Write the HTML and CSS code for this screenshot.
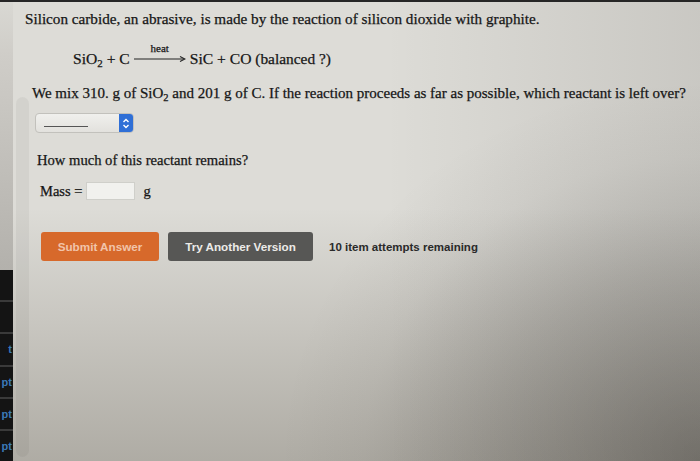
FILE: index.html
```html
<!DOCTYPE html>
<html>
<head>
<meta charset="utf-8">
<link rel="stylesheet" href="styles.css">
</head>
<body>
<div class="screen">
  <div class="topbar"></div>
  <div class="frame">
    <aside class="side">
      <div class="side-light"></div>
      <div class="tabs">
        <div class="tab"></div>
        <div class="tab"></div>
        <div class="tab"><span>t</span></div>
        <div class="tab"><span>pt</span></div>
        <div class="tab"><span>pt</span></div>
        <div class="tab"><span>pt</span></div>
      </div>
    </aside>
    <div class="track"></div>
    <main class="content">
      <p class="intro">Silicon carbide, an abrasive, is made by the reaction of silicon dioxide with graphite.</p>
      <div class="equation">
        <span>SiO<sub>2</sub> + C</span>
        <span class="arrow">
          <span class="heat">heat</span>
          <svg width="52" height="8" viewBox="0 0 52 8"><path d="M0 4 H50" stroke="#222" stroke-width="1.1"/><path d="M46 1.5 L51 4 L46 6.5" fill="none" stroke="#222" stroke-width="1.1"/></svg>
        </span>
        <span>SiC + CO <span class="bal">(balanced ?)</span></span>
      </div>
      <p class="question">We mix 310. g of SiO<sub>2</sub> and 201 g of C. If the reaction proceeds as far as possible, which reactant is left over?</p>
      <div class="select">
        <span class="blank"></span>
        <span class="stepper">
          <svg width="8" height="11" viewBox="0 0 8 11"><path d="M1.5 4 L4 1.5 L6.5 4 M1.5 7 L4 9.5 L6.5 7" fill="none" stroke="#fff" stroke-width="1.4"/></svg>
        </span>
      </div>
      <p class="how">How much of this reactant remains?</p>
      <div class="mass">
        <span>Mass =</span>
        <span class="input"></span>
        <span class="unit">g</span>
      </div>
      <div class="actions">
        <button class="btn submit">Submit Answer</button>
        <button class="btn another">Try Another Version</button>
        <span class="attempts">10 item attempts remaining</span>
      </div>
    </main>
  </div>
</div>
</body>
</html>
```

FILE: styles.css
```css
* { box-sizing: border-box; }
html, body { margin: 0; padding: 0; }
body {
  width: 700px;
  height: 461px;
  overflow: hidden;
  font-family: "Liberation Serif", "Times New Roman", serif;
  color: #161616;
}
.screen {
  width: 700px;
  height: 461px;
  display: flex;
  flex-direction: column;
  background-color: #dddcd7;
  background-image:
    radial-gradient(ellipse 420px 380px at 100% 100%, rgba(25,22,18,0.34) 0, rgba(25,22,18,0.16) 50%, rgba(25,22,18,0.04) 80%, rgba(0,0,0,0) 100%),
    linear-gradient(to right, rgba(0,0,0,0) 0%, rgba(0,0,0,0) 55%, rgba(30,25,20,0.1) 100%),
    linear-gradient(to bottom, rgba(0,0,0,0) 0%, rgba(0,0,0,0) 45%, rgba(50,42,28,0.27) 100%);
}
.topbar {
  height: 2px;
  background: #262626;
}
.frame {
  flex: 1;
  display: flex;
  position: relative;
}
.side {
  width: 13px;
  display: flex;
  flex-direction: column;
}
.side-light {
  height: 268px;
  background: linear-gradient(to bottom, #d9d8d3 0%, #cfcdc8 20%, #b3b1ac 100%);
}
.tabs {
  flex: 1;
  display: flex;
  flex-direction: column;
  gap: 2px;
  background: #3a3a3a;
}
.tab {
  flex: 1;
  background: #141414;
  font-family: "Liberation Sans", Arial, sans-serif;
  font-weight: bold;
  font-size: 11px;
  color: #3b79b8;
  display: flex;
  align-items: center;
  justify-content: flex-end;
  padding-right: 1px;
  overflow: hidden;
}
.track {
  position: absolute;
  left: 16px;
  top: 95px;
  width: 13px;
  height: 360px;
  border-radius: 7px;
  background: rgba(0,0,0,0.045);
}
.content {
  flex: 1;
  padding: 7px 0 0 12px;
  position: relative;
  -webkit-text-stroke: 0.25px #161616;
}
p { margin: 0; }
sub { font-size: 0.7em; vertical-align: -0.25em; line-height: 0; }
.intro { line-height: 19px; font-size: 15.2px; white-space: nowrap; }
.equation {
  display: flex;
  align-items: flex-end;
  gap: 4px;
  margin: 14px 0 0 48px;
  line-height: 19px;
  font-size: 15.6px;
}
.arrow {
  display: flex;
  flex-direction: column;
  align-items: center;
  padding-bottom: 5px;
}
.heat { font-size: 11px; line-height: 12px; margin-bottom: 1px; }
.bal { font-size: 15.4px; }
.question {
  margin: 15.5px 0 0 7px;
  line-height: 19px;
  font-size: 15px;
  white-space: nowrap;
}
.select {
  margin: 10.5px 0 0 10px;
  width: 99px;
  height: 20px;
  display: flex;
  border: 1px solid #c2c1bc;
  border-radius: 4px;
  background: linear-gradient(#f0f0ed, #e2e1dd);
  overflow: hidden;
}
.blank {
  flex: 1;
  display: flex;
  align-items: center;
  padding-left: 8px;
}
.blank::before {
  content: "";
  width: 44px;
  height: 1px;
  background: #555;
  margin-top: 6px;
}
.stepper {
  width: 14px;
  background: #2f6fd6;
  display: flex;
  align-items: center;
  justify-content: center;
}
.how {
  margin: 17.5px 0 0 12px;
  line-height: 19px;
  font-size: 14.6px;
}
.mass {
  margin: 12.5px 0 0 15px;
  display: flex;
  align-items: center;
  gap: 4px;
  font-size: 14.5px;
}
.input {
  width: 49px;
  height: 18px;
  background: #f1f1ee;
  border: 1px solid #cfcfca;
}
.unit { margin-left: 4px; }
.actions {
  margin: 32px 0 0 16px;
  display: flex;
  align-items: center;
  gap: 9px;
  -webkit-text-stroke: 0;
}
.btn {
  font-family: "Liberation Sans", Arial, sans-serif;
  font-weight: bold;
  font-size: 11.7px;
  height: 29px;
  border-radius: 3px;
  border: none;
  padding: 0;
}
.submit {
  width: 118px;
  background: #d7692b;
  color: #f1c4aa;
}
.another {
  width: 145px;
  background: #575755;
  color: #ecebe8;
}
.attempts {
  margin-left: 7px;
  font-family: "Liberation Sans", Arial, sans-serif;
  font-weight: bold;
  font-size: 11.5px;
  color: #2a2a2a;
}
```
